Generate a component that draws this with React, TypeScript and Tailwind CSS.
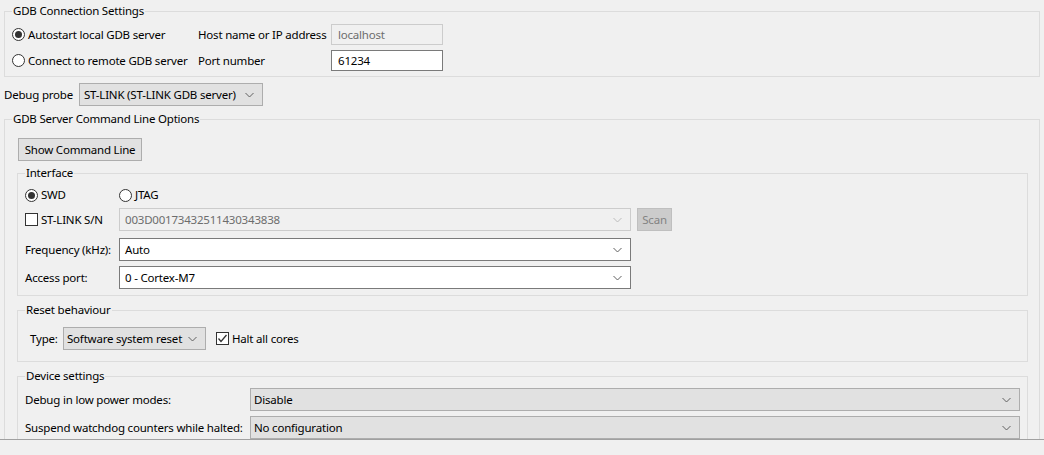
import React from "react";

const FONT = { fontFamily: '"Segoe UI", "Noto Sans", sans-serif' };

function Chevron({ color = "#606060" }: { color?: string }) {
  return (
    <svg width="9" height="6" viewBox="0 0 9 6" className="shrink-0">
      <polyline points="0.5,1 4.5,5 8.5,1" fill="none" stroke={color} strokeWidth="1" />
    </svg>
  );
}

function Radio({ checked, label }: { checked?: boolean; label: string }) {
  return (
    <div className="flex items-center">
      <span className="w-[13px] h-[13px] rounded-full border border-[#333333] bg-white flex items-center justify-center shrink-0">
        {checked && <span className="w-[7px] h-[7px] rounded-full bg-[#333333]" />}
      </span>
      <span className="ml-[3px] whitespace-nowrap">{label}</span>
    </div>
  );
}

function Check({ checked, label }: { checked?: boolean; label: string }) {
  return (
    <div className="flex items-center">
      <span className="w-[13px] h-[13px] border border-[#333333] bg-white flex items-center justify-center shrink-0">
        {checked && (
          <svg width="11" height="11" viewBox="0 0 11 11">
            <polyline points="1.5,5.5 4,8.5 9.5,2" fill="none" stroke="#333333" strokeWidth="1.3" />
          </svg>
        )}
      </span>
      <span className="ml-[3px] whitespace-nowrap">{label}</span>
    </div>
  );
}

function Group({
  title,
  className = "",
  inner = "",
  children,
}: {
  title: string;
  className?: string;
  inner?: string;
  children: React.ReactNode;
}) {
  return (
    <fieldset className={`border border-[#dcdcdc] ${className}`}>
      <legend className="ml-[7px] px-[1px] leading-[16px] text-black whitespace-nowrap">{title}</legend>
      <div className={inner}>{children}</div>
    </fieldset>
  );
}

export default function App() {
  return (
    <div
      className="w-[1044px] h-[455px] bg-[#f0f0f0] overflow-hidden text-[11.5px] tracking-[-0.2px] text-black"
      style={FONT}
    >
      <div className="h-[440px] border-b border-[#a0a0a0] overflow-hidden">
        <div className="pt-[3px] pl-[4px] pr-[4px]">
          {/* GDB Connection Settings */}
          <Group title="GDB Connection Settings" inner="pl-[7px] pt-[5px] pb-[5px]">
            <div className="grid grid-cols-[186px_133px_112px] grid-rows-[21px_21px] gap-y-[5px] items-center">
              <Radio checked label="Autostart local GDB server" />
              <span className="whitespace-nowrap">Host name or IP address</span>
              <div className="h-[21px] border border-[#cccccc] bg-[#f0f0f0] px-[6px] flex items-center text-[#6d6d6d]">
                localhost
              </div>
              <Radio label="Connect to remote GDB server" />
              <span>Port number</span>
              <div className="h-[21px] border border-[#7a7a7a] bg-white px-[6px] flex items-center">61234</div>
            </div>
          </Group>

          {/* Debug probe */}
          <div className="flex items-center mt-[6px]">
            <span className="w-[75px] whitespace-nowrap">Debug probe</span>
            <div className="w-[184px] h-[23px] border border-[#adadad] bg-[#e1e1e1] pl-[4px] pr-[8px] flex items-center justify-between">
              <span className="whitespace-nowrap">ST-LINK (ST-LINK GDB server)</span>
              <Chevron />
            </div>
          </div>

          {/* GDB Server Command Line Options */}
          <Group
            title="GDB Server Command Line Options"
            className="mt-[5px] h-[400px]"
            inner="pl-[12px] pr-[11px] pt-[11px]"
          >
            <button className="ml-[1px] w-[124px] h-[23px] border border-[#adadad] bg-[#e1e1e1] flex items-center justify-center">
              Show Command Line
            </button>

            {/* Interface */}
            <Group title="Interface" className="mt-[4px]" inner="pl-[7px] pt-[5px] pb-[6px]">
              <div className="h-[18px] flex items-center">
                <div className="w-[94px]">
                  <Radio checked label="SWD" />
                </div>
                <Radio label="JTAG" />
              </div>
              <div className="mt-[4px] h-[23px] flex items-center">
                <div className="w-[94px]">
                  <Check label="ST-LINK S/N" />
                </div>
                <div className="w-[512px] h-[23px] border border-[#cccccc] bg-[#f0f0f0] flex items-center justify-between pr-[8px]">
                  <div className="h-[17px] ml-[2px] w-[490px] bg-[#f0f0f0] flex items-center pl-[3px] text-[#6d6d6d]">
                    003D00173432511430343838
                  </div>
                  <Chevron color="#bcbcbc" />
                </div>
                <button className="ml-[6px] w-[35px] h-[23px] border border-[#bfbfbf] bg-[#cccccc] text-[#838383] flex items-center justify-center">
                  Scan
                </button>
              </div>
              <div className="mt-[7px] h-[23px] flex items-center">
                <span className="w-[94px] whitespace-nowrap">Frequency (kHz):</span>
                <div className="w-[512px] h-[23px] border border-[#7a7a7a] bg-white flex items-center justify-between pl-[5px] pr-[8px]">
                  <span>Auto</span>
                  <Chevron />
                </div>
              </div>
              <div className="mt-[5px] h-[23px] flex items-center">
                <span className="w-[94px]">Access port:</span>
                <div className="w-[512px] h-[23px] border border-[#7a7a7a] bg-white flex items-center justify-between pl-[5px] pr-[8px]">
                  <span>0 - Cortex-M7</span>
                  <Chevron />
                </div>
              </div>
            </Group>

            {/* Reset behaviour */}
            <Group title="Reset behaviour" className="mt-[6px]" inner="pl-[12px] pt-[9px] pb-[11px]">
              <div className="h-[23px] flex items-center">
                <span className="w-[33px]">Type:</span>
                <div className="w-[143px] h-[23px] border border-[#adadad] bg-[#e1e1e1] flex items-center justify-between pl-[3px] pr-[8px]">
                  <span className="whitespace-nowrap">Software system reset</span>
                  <Chevron />
                </div>
                <div className="ml-[10px]">
                  <Check checked label="Halt all cores" />
                </div>
              </div>
            </Group>

            {/* Device settings */}
            <Group title="Device settings" className="mt-[6px]" inner="pl-[7px] pr-[7px] pt-[4px] pb-[6px]">
              <div className="h-[23px] flex items-center">
                <span className="w-[225px] whitespace-nowrap">Debug in low power modes:</span>
                <div className="flex-1 h-[23px] border border-[#adadad] bg-[#e1e1e1] flex items-center justify-between pl-[3px] pr-[8px]">
                  <span>Disable</span>
                  <Chevron />
                </div>
              </div>
              <div className="mt-[5px] h-[23px] flex items-center">
                <span className="w-[225px] whitespace-nowrap">Suspend watchdog counters while halted:</span>
                <div className="flex-1 h-[23px] border border-[#adadad] bg-[#e1e1e1] flex items-center justify-between pl-[3px] pr-[8px]">
                  <span>No configuration</span>
                  <Chevron />
                </div>
              </div>
            </Group>
          </Group>
        </div>
      </div>
    </div>
  );
}
